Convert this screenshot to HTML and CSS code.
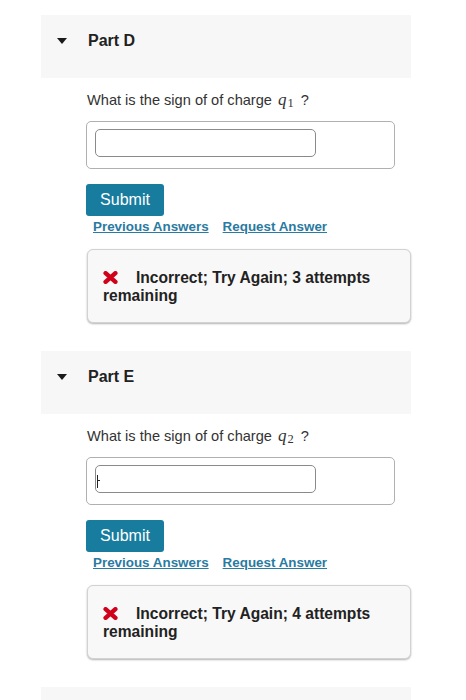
FILE: index.html
```html
<!DOCTYPE html>
<html>
<head>
    <meta charset="UTF-8">
    <title>Parts D and E</title>
    <link rel="stylesheet" href="styles.css">
</head>
<body>
    <div class="part">
        <div class="part-head">
            <span class="caret"></span>
            <h2>Part D</h2>
        </div>
        <div class="part-body">
            <p class="question">What is the sign of of charge <span class="math"><i>q</i><sub>1</sub></span> ?</p>
            <div class="answer-box">
                <div class="answer-input"></div>
            </div>
            <button class="submit">Submit</button>
            <div class="links">
                <a href="#">Previous Answers</a>
                <a href="#">Request Answer</a>
            </div>
            <div class="feedback">
                <svg class="wrong" width="15" height="13" viewBox="0 0 15 13"><path d="M2.6 2.2 L12.4 10.8 M12.4 2.2 L2.6 10.8" stroke="#d0021b" stroke-width="4.4" stroke-linecap="round"/></svg>Incorrect; Try Again; 3 attempts remaining
            </div>
        </div>
    </div>

    <div class="part">
        <div class="part-head">
            <span class="caret"></span>
            <h2>Part E</h2>
        </div>
        <div class="part-body">
            <p class="question">What is the sign of of charge <span class="math"><i>q</i><sub>2</sub></span> ?</p>
            <div class="answer-box">
                <div class="answer-input"><span class="text-caret"></span></div>
            </div>
            <button class="submit">Submit</button>
            <div class="links">
                <a href="#">Previous Answers</a>
                <a href="#">Request Answer</a>
            </div>
            <div class="feedback">
                <svg class="wrong" width="15" height="13" viewBox="0 0 15 13"><path d="M2.6 2.2 L12.4 10.8 M12.4 2.2 L2.6 10.8" stroke="#d0021b" stroke-width="4.4" stroke-linecap="round"/></svg>Incorrect; Try Again; 4 attempts remaining
            </div>
        </div>
    </div>

    <div class="part">
        <div class="part-head"></div>
    </div>
</body>
</html>
```

FILE: styles.css
```css
body {
    background-color: #ffffff;
    color: #222222;
    font-family: "Liberation Sans", Arial, sans-serif;
    margin: 0;
    padding: 15px 0 0 0;
}

.part {
    width: 370px;
    margin-left: 41px;
    margin-bottom: 28px;
}

.part-head {
    display: flex;
    align-items: flex-start;
    height: 63px;
    box-sizing: border-box;
    padding: 16px 0 0 16px;
    background-color: #f7f7f7;
}

.caret {
    width: 0;
    height: 0;
    margin-top: 7px;
    border-left: 5px solid transparent;
    border-right: 5px solid transparent;
    border-top: 6px solid #1a1a1a;
}

.part-head h2 {
    margin: 0 0 0 21px;
    font-size: 16px;
    line-height: 20px;
    font-weight: bold;
    color: #222222;
}

.part-body {
    padding-left: 45px;
}

.question {
    margin: 12px 0 0 1px;
    font-size: 14.6px;
    line-height: 20px;
    color: #333333;
}

.math {
    margin: 0 3px 0 2px;
}

.math i {
    font-family: "Liberation Serif", "Times New Roman", serif;
    font-size: 17px;
}

.math sub {
    font-family: "Liberation Serif", "Times New Roman", serif;
    font-size: 12.5px;
    vertical-align: -2px;
    line-height: 0;
    margin-left: 1px;
}

.answer-box {
    width: 309px;
    height: 48px;
    box-sizing: border-box;
    margin-top: 11px;
    padding: 7px 8px;
    border: 1px solid #b0b0b0;
    border-radius: 5px;
}

.answer-input {
    display: flex;
    align-items: center;
    width: 221px;
    height: 28px;
    box-sizing: border-box;
    border: 1px solid #8a8a8a;
    border-radius: 5px;
    background-color: #ffffff;
}

.text-caret {
    width: 1px;
    height: 13px;
    margin-left: 1px;
    margin-top: 4px;
    background-color: #222222;
    position: relative;
}

.text-caret::after {
    content: "";
    position: absolute;
    left: 0;
    top: 5px;
    width: 3px;
    height: 1px;
    background-color: #222222;
}

.submit {
    display: block;
    margin-top: 15px;
    width: 78px;
    height: 32px;
    padding: 0;
    border: none;
    border-radius: 3px;
    background-color: #177c9e;
    color: #ffffff;
    font-family: "Liberation Sans", Arial, sans-serif;
    font-size: 16px;
}

.links {
    display: flex;
    gap: 14px;
    margin: 3px 0 0 7px;
    line-height: 16px;
}

.links a {
    color: #2a7aa1;
    font-size: 13.4px;
    font-weight: bold;
}

.feedback {
    width: 324px;
    box-sizing: border-box;
    margin: 14px 0 0 1px;
    padding: 19px 15px 17px 15px;
    background-color: #f8f8f8;
    border: 1px solid #d2d2d2;
    border-radius: 6px;
    box-shadow: 0 1px 2px rgba(0, 0, 0, 0.3);
    font-size: 15.6px;
    line-height: 18px;
    font-weight: bold;
    color: #222222;
}

.wrong {
    vertical-align: -1px;
    margin-right: 18px;
}
```
